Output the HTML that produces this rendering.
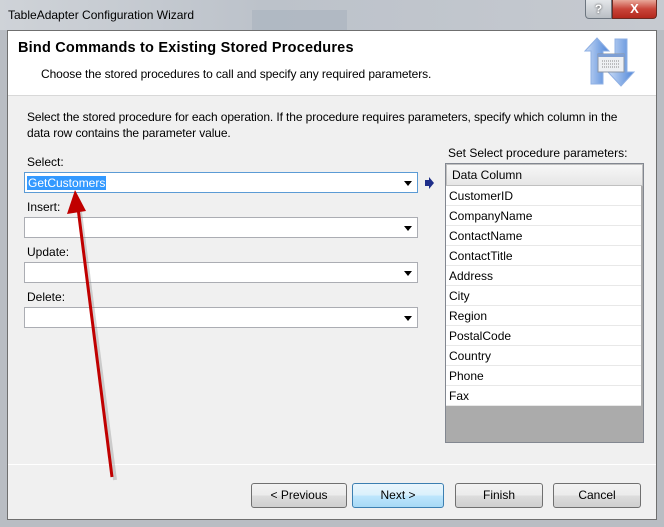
<!DOCTYPE html>
<html><head><style>
body{margin:0;width:664px;height:527px;overflow:hidden;font-family:"Liberation Sans",sans-serif;font-size:12px;color:#000;position:relative;background:#b9bdc3}
.a{position:absolute}
.combo{position:absolute;left:24px;width:394px;height:21px;background:#fff;border:1px solid #abadb3;box-sizing:border-box}
.combo:after{content:"";position:absolute;right:5px;top:8px;border-left:4px solid transparent;border-right:4px solid transparent;border-top:5px solid #000}
.btn{position:absolute;top:483px;height:25px;border:1px solid #707070;border-radius:3px;background:linear-gradient(#f2f2f2,#ebebeb 50%,#dddddd 51%,#cfcfcf);box-sizing:border-box;text-align:center;line-height:23px;font-size:12px}
.row{height:20px;line-height:20px;border-bottom:1px solid #e8e8e8;box-sizing:border-box;padding-left:3px}
</style></head><body>
<div class="a" style="left:0;top:0;width:664px;height:30px;background:linear-gradient(90deg,#cfd3d8,#bcc2ca 40%,#c6cad0)"></div>
<div class="a" style="left:252px;top:10px;width:95px;height:20px;background:#a9b3be;opacity:.6"></div>
<div class="a" style="left:8px;top:8px;font-size:12px">TableAdapter Configuration Wizard</div>
<div class="a" style="left:585px;top:0;width:27px;height:19px;border:1px solid #6d7680;border-top:0;border-radius:0 0 0 4px;background:linear-gradient(#e4e7ea,#b9bec4);box-sizing:border-box;text-align:center;font-weight:bold;color:#fff;line-height:18px;text-shadow:0 0 2px #333">?</div>
<div class="a" style="left:612px;top:0;width:45px;height:19px;border:1px solid #6b2a22;border-top:0;border-radius:0 0 4px 0;background:linear-gradient(#e8a89a,#c9453a 50%,#b3281d);box-sizing:border-box;text-align:center;font-weight:bold;color:#fff;line-height:18px;font-size:13px">X</div>
<div class="a" style="left:7px;top:30px;width:650px;height:490px;background:#f0f0f0;border:1px solid #6f6f6f;box-sizing:border-box"></div>
<div class="a" style="left:8px;top:31px;width:648px;height:64px;background:#fff;border-bottom:1px solid #d8d8d8"></div>
<div class="a" style="left:18px;top:40px;font-weight:bold;font-size:14.5px;letter-spacing:0.2px">Bind Commands to Existing Stored Procedures</div>
<div class="a" style="left:41px;top:67px;font-size:12px;letter-spacing:-0.1px">Choose the stored procedures to call and specify any required parameters.</div>
<svg class="a" style="left:582px;top:36px" width="60" height="52">
<defs><linearGradient id="g" x1="0" x2="1"><stop offset="0" stop-color="#c9dbf5"/><stop offset="1" stop-color="#4f86d9"/></linearGradient></defs>
<path d="M3 15 L15 2 L27 15 L21 15 L21 48 L9 48 L9 15Z" fill="url(#g)" stroke="#8fb0e4"/>
<path d="M33 3 L45 3 L45 36 L52 36 L39 50 L26 36 L33 36Z" fill="url(#g)" stroke="#8fb0e4"/>
<rect x="16" y="18" width="26" height="18" fill="#eef0f3" stroke="#8995a5"/>
<rect x="16" y="18" width="26" height="3" fill="#7e9fd4"/>
<path d="M20 25h18M20 28h18M20 31h18" stroke="#888" stroke-dasharray="1 1"/>
</svg>
<div class="a" style="left:27px;top:109px;line-height:16px;letter-spacing:-0.1px">Select the stored procedure for each operation. If the procedure requires parameters, specify which column in the<br>data row contains the parameter value.</div>
<div class="a" style="left:27px;top:155px">Select:</div>
<div class="combo" style="top:172px;border-color:#5b9bd5"><span style="position:absolute;left:2px;top:3px;background:#3399ff;color:#fff;padding:0 1px">GetCustomers</span></div>
<svg class="a" style="left:424px;top:177px" width="10" height="12"><path d="M1 3h4V0l5 6-5 6V9H1z" fill="#1f2f8a"/></svg>
<div class="a" style="left:27px;top:200px">Insert:</div>
<div class="combo" style="top:217px"></div>
<div class="a" style="left:27px;top:245px">Update:</div>
<div class="combo" style="top:262px"></div>
<div class="a" style="left:27px;top:290px">Delete:</div>
<div class="combo" style="top:307px"></div>
<div class="a" style="left:448px;top:146px">Set Select procedure parameters:</div>
<div class="a" style="left:445px;top:163px;width:199px;height:280px;background:#ababab;border:1px solid #828790;box-sizing:border-box">
<div style="height:22px;line-height:21px;background:linear-gradient(#f7f7f7,#e6e6e6);border:1px solid #c0c0c0;box-sizing:border-box;padding-left:5px">Data Column</div>
<div style="background:#fff;width:195px">
<div class="row">CustomerID</div><div class="row">CompanyName</div><div class="row">ContactName</div><div class="row">ContactTitle</div><div class="row">Address</div><div class="row">City</div><div class="row">Region</div><div class="row">PostalCode</div><div class="row">Country</div><div class="row">Phone</div><div class="row">Fax</div>
</div></div>
<div class="a" style="left:8px;top:464px;width:648px;height:1px;background:#fff"></div>
<div class="btn" style="left:251px;width:96px">&lt; Previous</div>
<div class="btn" style="left:352px;width:92px;border-color:#3c7fb1;background:linear-gradient(#eaf6fd,#d9f0fc 50%,#bee6fd 51%,#a7d9f5)">Next &gt;</div>
<div class="btn" style="left:455px;width:88px">Finish</div>
<div class="btn" style="left:553px;width:88px">Cancel</div>
<svg class="a" style="left:0;top:0" width="664" height="527">
<line x1="115" y1="480" x2="80" y2="212" stroke="#888" stroke-width="4" opacity=".35"/>
<line x1="112" y1="477" x2="78" y2="208" stroke="#c00000" stroke-width="3"/>
<path d="M75 190 L67 214 L86 211Z" fill="#c00000"/>
</svg>
</body></html>
